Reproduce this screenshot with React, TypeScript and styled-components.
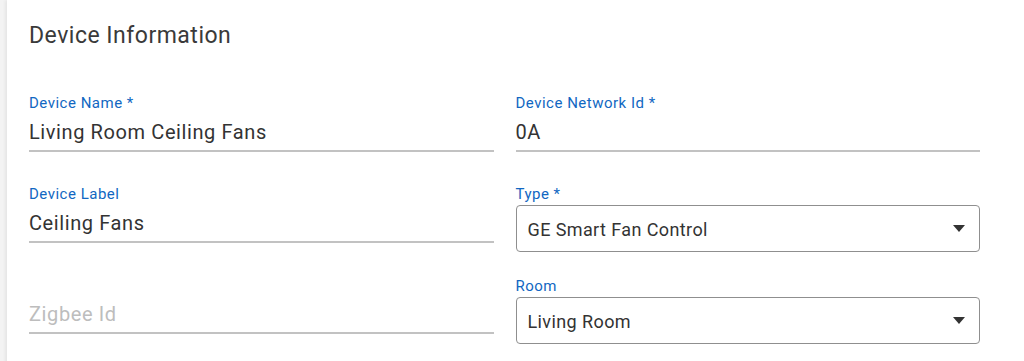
import styled, { createGlobalStyle } from "styled-components";

const GlobalStyle = createGlobalStyle`
  html, body {
    margin: 0;
    padding: 0;
    background: #f3f3f3;
  }
  body {
    font-family: Roboto, "Noto Sans", "Liberation Sans", sans-serif;
  }
`;

type TextFieldProps = {
  label?: string;
  value?: string;
  placeholder?: string;
};

const TextField = ({ label, value, placeholder }: TextFieldProps) => (
  <Field $gap={34}>
    <Label>{label ?? "\u00a0"}</Label>
    <Input readOnly value={value ?? ""} placeholder={placeholder} />
  </Field>
);

type SelectFieldProps = {
  label: string;
  value: string;
};

const SelectField = ({ label, value }: SelectFieldProps) => (
  <Field $gap={26}>
    <Label>{label}</Label>
    <SelectBox>
      <Select value={value} onChange={() => {}}>
        <option>{value}</option>
      </Select>
      <Arrow width="12" height="7" viewBox="0 0 12 7">
        <path d="M0 0h12L6 7z" fill="#333" />
      </Arrow>
    </SelectBox>
  </Field>
);

const App = () => {
  return (
    <>
      <GlobalStyle />
      <Card>
        <Title>Device Information</Title>
        <Columns>
          <Column>
            <TextField label="Device Name *" value="Living Room Ceiling Fans" />
            <TextField label="Device Label" value="Ceiling Fans" />
            <TextField placeholder="Zigbee Id" />
          </Column>
          <Column>
            <TextField label="Device Network Id *" value="0A" />
            <SelectField label="Type *" value="GE Smart Fan Control" />
            <SelectField label="Room" value="Living Room" />
          </Column>
        </Columns>
      </Card>
    </>
  );
};

export default App;

const Card = styled.div`
  margin-left: 7px;
  min-height: 361px;
  box-sizing: border-box;
  background: #fff;
  padding: 22px 44px 0 22px;
  box-shadow: -2px 0 3px rgba(0, 0, 0, 0.06);
`;

const Title = styled.h2`
  margin: 0 0 45px;
  font-size: 23px;
  line-height: 28px;
  font-weight: 400;
  letter-spacing: 0.5px;
  color: #3a3a3a;
`;

const Columns = styled.div`
  display: grid;
  grid-template-columns: 1fr 1fr;
  column-gap: 22px;
`;

const Column = styled.div`
  display: flex;
  flex-direction: column;
`;

const Field = styled.div<{ $gap: number }>`
  display: flex;
  flex-direction: column;
  margin-bottom: ${p => p.$gap}px;
`;

const Label = styled.label`
  font-size: 15px;
  line-height: 17px;
  letter-spacing: 0.5px;
  color: #1167c2;
`;

const Input = styled.input`
  box-sizing: border-box;
  height: 40px;
  padding: 2px 0 0;
  margin: 0;
  border: none;
  border-bottom: 2px solid #c2c2c2;
  outline: none;
  background: transparent;
  font-family: inherit;
  font-size: 20px;
  letter-spacing: 0.6px;
  color: #333;

  &::placeholder {
    color: #bdbdbd;
  }
`;

const SelectBox = styled.div`
  position: relative;
  margin-top: 2px;
`;

const Select = styled.select`
  appearance: none;
  width: 100%;
  box-sizing: border-box;
  height: 47px;
  margin: 0;
  padding: 2px 40px 0 11px;
  border: 1px solid #8f8f8f;
  border-radius: 4px;
  background: #fff;
  font-family: inherit;
  font-size: 18px;
  letter-spacing: 0.4px;
  color: #333;
  outline: none;
`;

const Arrow = styled.svg`
  position: absolute;
  right: 15px;
  top: 20px;
  pointer-events: none;
`;
